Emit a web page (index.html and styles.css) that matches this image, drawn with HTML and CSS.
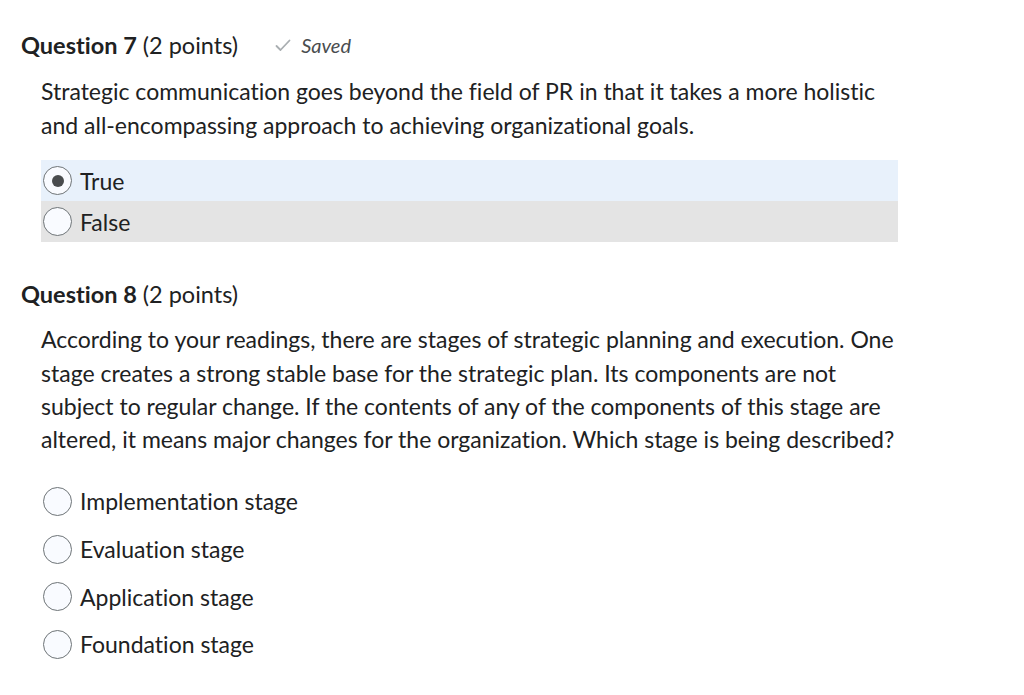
FILE: index.html
```html
<!DOCTYPE html>
<html>
<head>
<meta charset="utf-8">
<link rel="stylesheet" href="styles.css">
</head>
<body>
<div class="page">
  <section class="question q7">
    <h2 class="qhead"><span class="qtitle">Question 7</span> (2 points)
      <span class="saved"><svg class="check" width="16" height="13" viewBox="0 0 16 13"><path d="M1.5 7 L5.5 11 L14.5 1.5" fill="none" stroke="#a9aeb1" stroke-width="1.8" stroke-linecap="round" stroke-linejoin="round"/></svg><em>Saved</em></span>
    </h2>
    <p class="qtext">Strategic communication goes beyond the field of PR in that it takes a more holistic and all-encompassing approach to achieving organizational goals.</p>
    <div class="options boxed">
      <div class="opt selected"><span class="radio checked"></span><span class="label">True</span></div>
      <div class="opt hover"><span class="radio"></span><span class="label">False</span></div>
    </div>
  </section>
  <section class="question q8">
    <h2 class="qhead"><span class="qtitle">Question 8</span> (2 points)</h2>
    <p class="qtext">According to your readings, there are stages of strategic planning and execution. One stage creates a strong stable base for the strategic plan. Its components are not subject to regular change. If the contents of any of the components of this stage are altered, it means major changes for the organization. Which stage is being described?</p>
    <div class="options spaced">
      <div class="opt"><span class="radio"></span><span class="label">Implementation stage</span></div>
      <div class="opt"><span class="radio"></span><span class="label">Evaluation stage</span></div>
      <div class="opt"><span class="radio"></span><span class="label">Application stage</span></div>
      <div class="opt"><span class="radio"></span><span class="label">Foundation stage</span></div>
    </div>
  </section>
</div>
</body>
</html>
```
FILE: styles.css
```css
html, body {
  margin: 0;
  padding: 0;
  background: #ffffff;
}
body {
  font-family: Lato, "Noto Sans", sans-serif;
  color: #202122;
  font-variant-ligatures: none;
}
.page {
  padding: 30px 0 0 21px;
  width: 880px;
}
.qhead {
  margin: 0;
  font-size: 23.5px;
  font-weight: 400;
  line-height: 30px;
  height: 30px;
  display: flex;
  align-items: center;
}
.qtitle {
  font-weight: 700;
  margin-right: 6px;
}
.saved {
  display: inline-flex;
  align-items: center;
  margin-left: 37px;
  color: #494c4e;
  font-size: 20px;
}
.saved .check {
  margin-right: 10px;
}
.qtext {
  margin: 14px 0 0 20px;
  font-size: 23px;
  line-height: 34px;
  width: 862px;
}
.q8 .qtext {
  margin-top: 14.3px;
  line-height: 33.33px;
}
.options.boxed {
  margin: 18px 0 0 20px;
  width: 857px;
}
.opt {
  display: flex;
  align-items: center;
  height: 41px;
  font-size: 23px;
}
.opt.selected {
  background: #e8f1fb;
}
.opt.hover {
  background: #e4e4e4;
}
.radio {
  box-sizing: border-box;
  width: 29px;
  height: 29px;
  border: 1.5px solid #6e7477;
  border-radius: 50%;
  background: #f9fbff;
  margin-left: 2px;
  margin-right: 8px;
  display: inline-flex;
  align-items: center;
  justify-content: center;
  flex: none;
}
.radio.checked::after {
  content: "";
  width: 12px;
  height: 12px;
  border-radius: 50%;
  background: #494c4e;
}
.q8 {
  margin-top: 37px;
}
.options.spaced {
  margin: 21px 0 0 20px;
}
.options.spaced .opt {
  height: 47.67px;
}
```
